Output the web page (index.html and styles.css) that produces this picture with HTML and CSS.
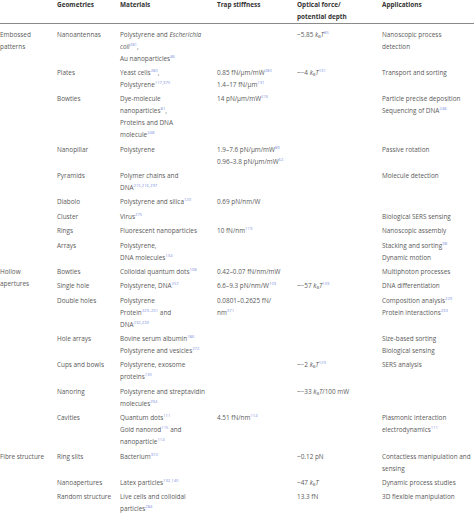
FILE: index.html
```html
<!DOCTYPE html>
<html>
<head>
<meta charset="utf-8">
<link rel="stylesheet" href="styles.css">
</head>
<body>
<table class="tbl">
<colgroup>
<col class="c1"><col class="c2"><col class="c3"><col class="c4"><col class="c5"><col class="c6">
</colgroup>
<thead>
<tr><th></th><th>Geometries</th><th>Materials</th><th>Trap stiffness</th><th>Optical force/<br>potential depth</th><th>Applications</th></tr>
</thead>
<tbody>
<tr class="first"><td rowspan="9">Embossed<br>patterns</td><td>Nanoantennas</td><td>Polystyrene and <i>Escherichia</i><br><i>coli</i><sup>281</sup>,<br>Au nanoparticles<sup>86</sup></td><td></td><td>~5.85 <i>k</i><sub>B</sub><i>T</i><sup>85</sup></td><td>Nanoscopic process<br>detection</td></tr>
<tr><td>Plates</td><td>Yeast cells<sup>280</sup>,<br>Polystyrene<sup>117,370</sup></td><td>0.85 fN/μm/mW<sup>280</sup><br>1.4–17 fN/μm<sup>131</sup></td><td>~−4 <i>k</i><sub>B</sub><i>T</i><sup>131</sup></td><td>Transport and sorting</td></tr>
<tr><td>Bowties</td><td>Dye-molecule<br>nanoparticles<sup>81</sup>,<br>Proteins and DNA<br>molecule<sup>248</sup></td><td>14 pN/μm/mW<sup>216</sup></td><td></td><td>Particle precise deposition<br>Sequencing of DNA<sup>248</sup></td></tr>
<tr><td>Nanopillar</td><td>Polystyrene</td><td>1.9–7.6 pN/μm/mW<sup>89</sup><br>0.96–3.8 pN/μm/mW<sup>62</sup></td><td></td><td>Passive rotation</td></tr>
<tr><td>Pyramids</td><td>Polymer chains and<br>DNA<sup>215,216,297</sup></td><td></td><td></td><td>Molecule detection</td></tr>
<tr><td>Diabolo</td><td>Polystyrene and silica<sup>120</sup></td><td>0.69 pN/nm/W</td><td></td><td></td></tr>
<tr><td>Cluster</td><td>Virus<sup>275</sup></td><td></td><td></td><td>Biological SERS sensing</td></tr>
<tr><td>Rings</td><td>Fluorescent nanoparticles</td><td>10 fN/nm<sup>119</sup></td><td></td><td>Nanoscopic assembly</td></tr>
<tr><td>Arrays</td><td>Polystyrene,<br>DNA molecules<sup>134</sup></td><td></td><td></td><td>Stacking and sorting<sup>98</sup><br>Dynamic motion</td></tr>
<tr><td rowspan="7">Hollow<br>apertures</td><td>Bowties</td><td>Colloidal quantum dots<sup>108</sup></td><td>0.42–0.07 fN/nm/mW</td><td></td><td>Multiphoton processes</td></tr>
<tr><td>Single hole</td><td>Polystyrene, DNA<sup>257</sup></td><td>6.6–9.3 pN/nm/W<sup>103</sup></td><td>~−57 <i>k</i><sub>B</sub><i>T</i><sup>103</sup></td><td>DNA differentiation</td></tr>
<tr><td>Double holes</td><td>Polystyrene<br>Protein<sup>229–231</sup> and<br>DNA<sup>232,233</sup></td><td>0.0801–0.2625 fN/<br>nm<sup>371</sup></td><td></td><td>Composition analysis<sup>229</sup><br>Protein interactions<sup>233</sup></td></tr>
<tr><td>Hole arrays</td><td>Bovine serum albumin<sup>186</sup><br>Polystyrene and vesicles<sup>272</sup></td><td></td><td></td><td>Size-based sorting<br>Biological sensing</td></tr>
<tr><td>Cups and bowls</td><td>Polystyrene, exosome<br>proteins<sup>130</sup></td><td></td><td>~−2 <i>k</i><sub>B</sub><i>T</i><sup>129</sup></td><td>SERS analysis</td></tr>
<tr><td>Nanoring</td><td>Polystyrene and streptavidin<br>molecules<sup>294</sup></td><td></td><td>~−33 <i>k</i><sub>B</sub><i>T</i>/100 mW</td><td></td></tr>
<tr><td>Cavities</td><td>Quantum dots<sup>111</sup><br>Gold nanorod<sup>115</sup> and<br>nanoparticle<sup>114</sup></td><td>4.51 fN/nm<sup>114</sup></td><td></td><td>Plasmonic interaction<br>electrodynamics<sup>111</sup></td></tr>
<tr><td rowspan="3">Fibre structure</td><td>Ring slits</td><td>Bacterium<sup>372</sup></td><td></td><td>~0.12 pN</td><td>Contactless manipulation and<br>sensing</td></tr>
<tr><td>Nanoapertures</td><td>Latex particles<sup>132,140</sup></td><td></td><td>~47 <i>k</i><sub>B</sub><i>T</i></td><td>Dynamic process studies</td></tr>
<tr><td>Random structure</td><td>Live cells and colloidal<br>particles<sup>284</sup></td><td></td><td>13.3 fN</td><td>3D flexible manipulation</td></tr>
</tbody>
</table>
</body>
</html>
```
FILE: styles.css
```css
html, body {
  margin: 0;
  padding: 0;
  background: #fff;
  overflow: hidden;
  width: 474px;
  height: 514px;
}
.tbl {
  border-collapse: collapse;
  table-layout: fixed;
  width: 490px;
  margin-top: -1px;
  font-family: "Open Sans", "DejaVu Sans", sans-serif;
  font-size: 6.4px;
  color: #5a5a5a;
  white-space: nowrap;
}
.c1 { width: 57px; }
.c2 { width: 63px; }
.c3 { width: 97px; }
.c4 { width: 80px; }
.c5 { width: 85px; }
.c6 { width: 108px; }
.tbl th {
  text-align: left;
  vertical-align: top;
  font-weight: bold;
  color: #333;
  line-height: 11.5px;
  padding: 0 0 1px 0;
  border-bottom: 1.5px solid #8a8a8a;
}
.tbl td {
  vertical-align: top;
  line-height: 12px;
  padding: 1.2px 0;
}
.tbl tr.first td {
  padding-top: 4.5px;
}
.tbl sup {
  font-size: 4.2px;
  color: #7f93e0;
  vertical-align: 2.6px;
  line-height: 0;
}
.tbl sub {
  font-size: 4.2px;
  vertical-align: -1px;
  line-height: 0;
}
```
